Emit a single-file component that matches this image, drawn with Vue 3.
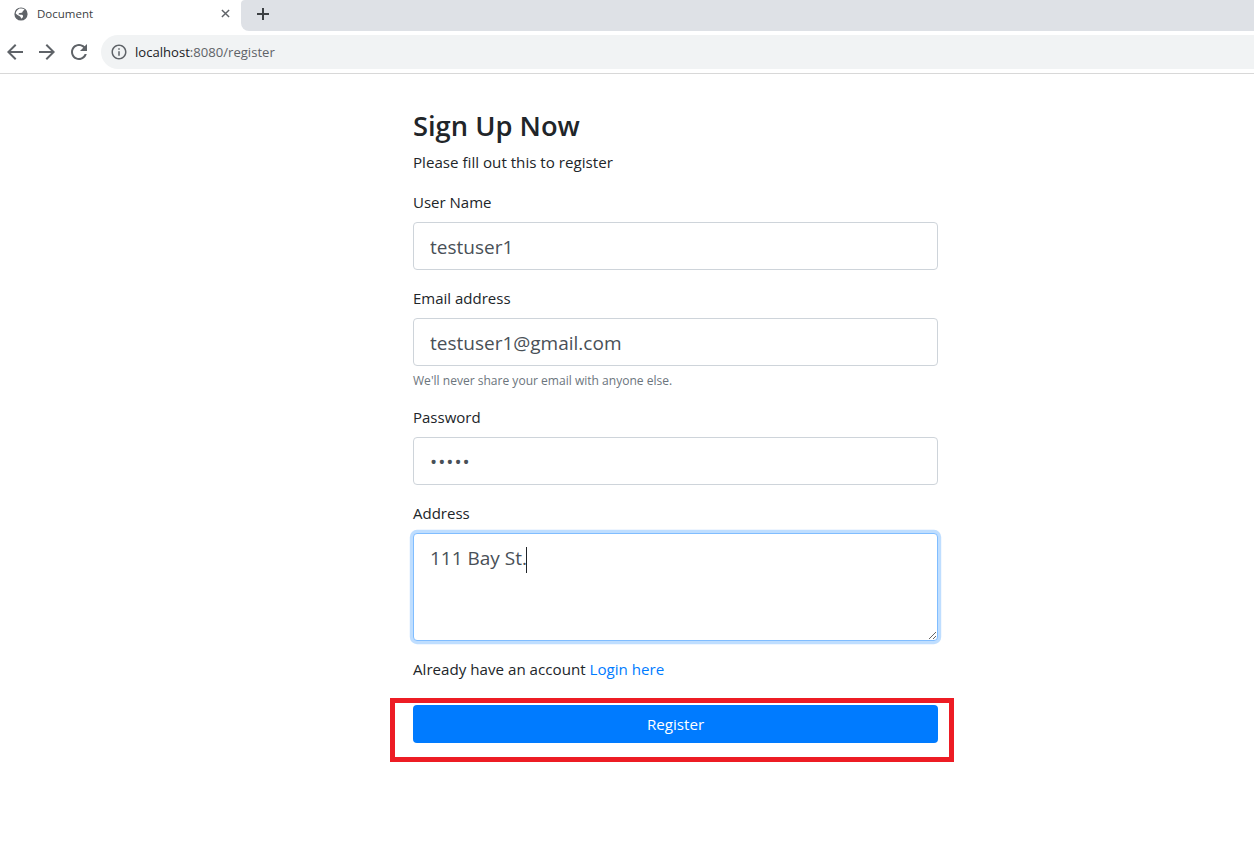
<template>
  <div class="page">
    <div class="tabstrip">
      <div class="tab">
        <svg class="favicon" viewBox="0 0 16 16">
          <circle cx="8" cy="8" r="6.6" />
          <path class="globe-land" d="M7 2.6c1.4-.4 3.2-.2 4.4.7-.2 1-1 1.3-1.6 1.9-.5.6-.2 1.3-1 1.6-1 .3-2.2-.1-3 .6-.4.4-.2 1 .3 1.2 1 .3 2-.2 2.9.2.8.4 1.2 1.1 1 2-.2.7-.9 1.2-1.3 1.8-.6-.1-.8-.7-1-1.3-.2-.8-.8-1-1.4-1.4-1-.6-2.6-1.3-3.6-2.4.2-1.6 1.6-3.9 3.8-4.9z" />
        </svg>
        <span class="tab-title">Document</span>
        <svg class="tab-close" viewBox="0 0 10 10"><path d="M1 1l8 8M9 1l-8 8" /></svg>
      </div>
      <div class="tab-rest">
        <svg class="new-tab" viewBox="0 0 14 14"><path d="M7 1v12M1 7h12" /></svg>
      </div>
    </div>

    <div class="toolbar">
      <svg class="nav-icon" viewBox="0 0 24 24"><path d="M20 11H7.83l5.59-5.59L12 4l-8 8 8 8 1.41-1.41L7.83 13H20v-2z" /></svg>
      <svg class="nav-icon" viewBox="0 0 24 24"><path d="M12 4l-1.41 1.41L16.17 11H4v2h12.17l-5.58 5.59L12 20l8-8z" /></svg>
      <svg class="nav-icon" viewBox="0 0 24 24"><path d="M17.65 6.35C16.2 4.9 14.21 4 12 4c-4.42 0-7.99 3.58-7.99 8s3.57 8 7.99 8c3.73 0 6.84-2.55 7.73-6h-2.08c-.82 2.33-3.04 4-5.65 4-3.31 0-6-2.69-6-6s2.69-6 6-6c1.66 0 3.14.69 4.22 1.78L13 11h7V4l-2.35 2.35z" /></svg>
      <div class="omnibox">
        <svg class="info-icon" viewBox="0 0 24 24"><path d="M11 7h2v2h-2zm0 4h2v6h-2zm1-9C6.48 2 2 6.48 2 12s4.48 10 10 10 10-4.48 10-10S17.52 2 12 2zm0 18c-4.41 0-8-3.59-8-8s3.59-8 8-8 8 3.59 8 8-3.59 8-8 8z" /></svg>
        <span class="url"><span class="host">localhost</span>:8080/register</span>
      </div>
    </div>

    <form class="signup" @submit.prevent>
      <h2>Sign Up Now</h2>
      <p class="lead">Please fill out this to register</p>

      <div class="field">
        <label>User Name</label>
        <input type="text" value="testuser1" />
      </div>

      <div class="field">
        <label>Email address</label>
        <input type="email" value="testuser1@gmail.com" />
        <small>We'll never share your email with anyone else.</small>
      </div>

      <div class="field after-hint">
        <label>Password</label>
        <input class="password" type="password" value="12345" />
      </div>

      <div class="field">
        <label>Address</label>
        <div class="area-wrap">
          <textarea class="focused" :value="address"></textarea>
          <span class="caret"></span>
        </div>
      </div>

      <p class="login">Already have an account <a href="#">Login here</a></p>

      <div class="submit-row">
        <button type="submit">Register</button>
        <div class="callout"></div>
      </div>
    </form>
  </div>
</template>

<script setup>
  const address = '111 Bay St.'
</script>

<style>
  body {
    margin: 0;
    background: #fff;
  }
</style>

<style scoped>
  .page {
    height: 841px;
    overflow: hidden;
    font-family: 'Open Sans', 'Noto Sans', sans-serif;
    color: #212529;
  }

  .tabstrip {
    height: 31px;
    display: flex;
  }

  .tab {
    width: 241px;
    display: flex;
    align-items: center;
    box-sizing: border-box;
    padding: 0 11px 4px 13px;
  }

  .tab-rest {
    flex: 1;
    background: #dee1e6;
    border-radius: 4px 0 0 8px;
    display: flex;
    align-items: center;
  }

  .favicon {
    width: 16px;
    height: 16px;
    fill: #5f6368;
  }

  .globe-land {
    fill: #fff;
  }

  .tab-title {
    margin-left: 8px;
    font-size: 11.5px;
    color: #3c4043;
    flex: 1;
  }

  .tab-close {
    width: 9px;
    height: 9px;
    stroke: #5f6368;
    stroke-width: 1.6;
    fill: none;
  }

  .new-tab {
    width: 14px;
    height: 14px;
    margin: 0 0 3px 15px;
    stroke: #3c4043;
    stroke-width: 2;
    fill: none;
  }

  .toolbar {
    height: 43px;
    box-sizing: border-box;
    border-bottom: 1px solid #d8d8d8;
    padding: 4px 0 4px 3px;
    display: flex;
    align-items: flex-start;
  }

  .nav-icon {
    width: 24px;
    height: 24px;
    margin: 5px 8px 0 0;
    fill: #5f6368;
  }

  .omnibox {
    flex: 1;
    height: 34px;
    margin-left: 2px;
    background: #f1f3f4;
    border-radius: 17px 0 0 17px;
    display: flex;
    align-items: center;
    padding-left: 9px;
  }

  .info-icon {
    width: 18px;
    height: 18px;
    fill: #5f6368;
  }

  .url {
    margin-left: 7px;
    font-size: 13.1px;
    color: #5f6368;
  }

  .host {
    color: #202124;
  }

  .signup {
    width: 525px;
    margin-left: 413px;
    padding-top: 33px;
  }

  h2 {
    margin: 0;
    font-size: 27.3px;
    line-height: 38px;
    font-weight: 600;
  }

  .lead {
    margin: 5px 0 0;
    font-size: 15.15px;
    line-height: 24px;
  }

  .field {
    margin-top: 16px;
    display: flex;
    flex-direction: column;
  }

  .field.after-hint {
    margin-top: 15px;
  }

  .field label {
    font-size: 15px;
    line-height: 24px;
    margin-bottom: 8px;
  }

  input,
  textarea {
    display: block;
    width: 100%;
    box-sizing: border-box;
    border: 1px solid #ced4da;
    border-radius: 4px;
    padding: 0 16px;
    font-family: inherit;
    font-size: 19px;
    color: #495057;
    background: #fff;
    outline: none;
    margin: 0;
  }

  input {
    height: 48px;
    padding-top: 2px;
  }

  .password {
    letter-spacing: 1px;
  }

  small {
    font-size: 12.05px;
    line-height: 19px;
    margin-top: 5px;
    color: #6c757d;
  }

  .area-wrap {
    position: relative;
  }

  textarea {
    height: 108px;
    padding-top: 8px;
    line-height: 32px;
  }

  .focused {
    border-color: #80bdff;
    box-shadow: 0 0 0 3.2px rgba(0, 123, 255, 0.25);
  }

  .caret {
    position: absolute;
    left: 113px;
    top: 14px;
    width: 1px;
    height: 26px;
    background: #212529;
  }

  .login {
    margin: 16px 0 0;
    font-size: 15.15px;
    line-height: 24px;
  }

  .login a {
    color: #007bff;
    text-decoration: none;
  }

  .submit-row {
    position: relative;
    margin-top: 24px;
  }

  button {
    display: block;
    width: 100%;
    height: 38px;
    border: 0;
    border-radius: 4px;
    background: #007bff;
    color: #fff;
    font-family: inherit;
    font-size: 15.15px;
  }

  .callout {
    position: absolute;
    left: -23px;
    right: -16px;
    top: -7px;
    bottom: -19px;
    border: 5px solid #ed1c24;
    pointer-events: none;
  }
</style>
